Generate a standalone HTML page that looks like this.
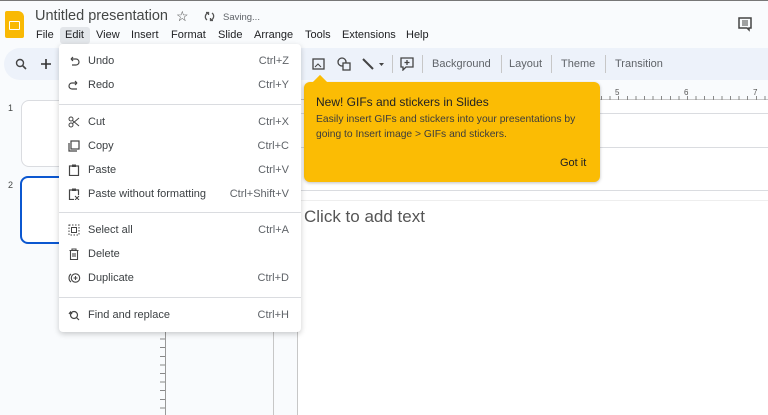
<!DOCTYPE html>
<html><head><style>
*{margin:0;padding:0;box-sizing:border-box}
body{width:768px;height:415px;overflow:hidden;background:#f9fbfd;font-family:"Liberation Sans",sans-serif;color:#444746;position:relative}
.a{position:absolute}
.mi{position:absolute;left:0;width:242px;height:24px;font-size:11px;color:#3c4043}
.mi .t{position:absolute;left:29px;top:5px}
.mi .k{position:absolute;right:12px;top:5px;color:#5f6368}
.mi svg{position:absolute;left:9px;top:5px}
.sep{position:absolute;left:0;width:242px;height:1px;background:#dadce0}
.tb{position:absolute;top:58px;font-size:11px;color:#5f6368}
.vs{position:absolute;top:55px;width:1px;height:18px;background:#c7c7c7}
</style></head><body>
<div class="a" style="left:0;top:0;width:768px;height:1px;background:#777"></div>
<!-- logo -->
<div class="a" style="left:5px;top:11px;width:19px;height:27px;background:#f9b904;border-radius:2px 6px 2px 2px"></div>
<div class="a" style="left:9px;top:21px;width:11px;height:9px;border:1.5px solid #fff;border-radius:1px"></div>
<div class="a" style="left:35px;top:8px;font-size:14.5px;color:#444746">Untitled presentation</div>
<div class="a" style="left:176px;top:8px;font-size:14px;color:#444">☆</div>
<svg class="a" style="left:204px;top:11px" width="11" height="11"><path d="M4 2a4 4 0 00-1 7M7 9a4 4 0 001-7M2 1.5h2.5v2.5M9 9.5H6.5V7" fill="none" stroke="#555" stroke-width="1.3"/></svg>
<div class="a" style="left:223px;top:12px;font-size:9.5px;color:#5f6368">Saving...</div>
<div class="a" style="left:60px;top:27px;width:30px;height:17px;background:#e3e6ea;border-radius:3px"></div>
<div class="a" style="left:0;top:29px;font-size:11px;color:#202124">
<span class="a" style="left:36px">File</span><span class="a" style="left:65px">Edit</span><span class="a" style="left:96px">View</span><span class="a" style="left:131px">Insert</span><span class="a" style="left:171px">Format</span><span class="a" style="left:218px">Slide</span><span class="a" style="left:254px">Arrange</span><span class="a" style="left:305px">Tools</span><span class="a" style="left:342px">Extensions</span><span class="a" style="left:406px">Help</span></div>
<svg class="a" style="left:737px;top:16px" width="16" height="16" viewBox="0 0 16 16"><path d="M2 2h12v10h-2v2l-2-2H2z" fill="none" stroke="#444" stroke-width="1.5"/><path d="M5 5h6M5 7h6M5 9h6" stroke="#444" stroke-width="1"/></svg>
<!-- toolbar -->
<div class="a" style="left:4px;top:48px;width:764px;height:32px;background:#edf2fa;border-radius:16px 0 0 16px"></div>
<svg class="a" style="left:15px;top:58px" width="12" height="12"><circle cx="5" cy="5" r="3.5" fill="none" stroke="#444" stroke-width="1.4"/><path d="M7.5 7.5L11 11" stroke="#444" stroke-width="1.6"/></svg>
<svg class="a" style="left:41px;top:59px" width="10" height="10"><path d="M5 0v10M0 5h10" stroke="#333" stroke-width="1.6"/></svg>
<svg class="a" style="left:312px;top:58px" width="13" height="12"><rect x="1" y="1" width="11" height="10" fill="none" stroke="#444" stroke-width="1.3"/><path d="M3 9l3-3 3 3" stroke="#444" fill="none"/></svg>
<svg class="a" style="left:337px;top:57px" width="14" height="14"><circle cx="5" cy="5" r="4" fill="none" stroke="#444" stroke-width="1.3"/><rect x="6" y="6" width="7" height="7" fill="#edf2fa" stroke="#444" stroke-width="1.3"/></svg>
<svg class="a" style="left:362px;top:58px" width="22" height="12"><path d="M1 1l10 10" stroke="#444" stroke-width="2"/><path d="M17 5l2.5 3 2.5-3z" fill="#444"/></svg>
<div class="vs" style="left:392px"></div>
<svg class="a" style="left:400px;top:57px" width="14" height="14"><path d="M1 1h12v9H6l-3 3V10H1z" fill="none" stroke="#444" stroke-width="1.3"/><path d="M7 3v5M4.5 5.5h5" stroke="#444" stroke-width="1.3"/></svg>
<div class="vs" style="left:422px"></div>
<div class="tb" style="left:432px">Background</div><div class="vs" style="left:501px"></div>
<div class="tb" style="left:509px">Layout</div><div class="vs" style="left:551px"></div>
<div class="tb" style="left:561px">Theme</div><div class="vs" style="left:605px"></div>
<div class="tb" style="left:615px">Transition</div>
<!-- ruler -->
<div class="a" style="left:300px;top:99px;width:468px;height:1px;background:#c7c7c7"></div>
<div class="a" style="left:300px;top:96px;width:468px;height:4px;background:repeating-linear-gradient(90deg,#888 0 1px,transparent 1px 8.6px)"></div>
<div class="a" style="left:615px;top:88px;font-size:8px;color:#555">5</div>
<div class="a" style="left:684px;top:88px;font-size:8px;color:#555">6</div>
<div class="a" style="left:753px;top:88px;font-size:8px;color:#555">7</div>
<!-- slide area -->
<div class="a" style="left:297px;top:100px;width:471px;height:315px;background:#fff;border-left:1px solid #c7c7c7"></div>
<div class="a" style="left:300px;top:113px;width:468px;height:1px;background:#dadce0"></div>
<div class="a" style="left:300px;top:147px;width:468px;height:1px;background:#dadce0"></div>
<div class="a" style="left:300px;top:190px;width:468px;height:1px;background:#dadce0"></div>
<div class="a" style="left:300px;top:200px;width:468px;height:1px;background:#eee"></div>
<div class="a" style="left:304px;top:207px;font-size:17px;color:#555">Click to add text</div>
<div class="a" style="left:273px;top:300px;width:1px;height:115px;background:#c7c7c7"></div>
<div class="a" style="left:165px;top:330px;width:1px;height:85px;background:#999"></div>
<div class="a" style="left:160px;top:330px;width:5px;height:85px;background:repeating-linear-gradient(180deg,#888 0 1px,transparent 1px 8.6px)"></div>
<!-- filmstrip -->
<div class="a" style="left:8px;top:103px;font-size:9px">1</div>
<div class="a" style="left:21px;top:100px;width:60px;height:67px;border:1px solid #dadce0;border-radius:8px;background:#fff"></div>
<div class="a" style="left:8px;top:180px;font-size:9px">2</div>
<div class="a" style="left:20px;top:176px;width:60px;height:68px;border:2px solid #0b57d0;border-radius:8px;background:#fff"></div>
<!-- tooltip -->
<div class="a" style="left:304px;top:82px;width:296px;height:100px;background:#fbbc04;border-radius:6px;box-shadow:0 1px 3px rgba(0,0,0,.25)"></div>
<div class="a" style="left:315px;top:77px;width:10px;height:10px;background:#fbbc04;transform:rotate(45deg)"></div>
<div class="a" style="left:316px;top:95px;font-size:12px;color:#202124">New! GIFs and stickers in Slides</div>
<div class="a" style="left:316px;top:112px;font-size:10.3px;color:#3c3c3c;line-height:15px;width:285px">Easily insert GIFs and stickers into your presentations by going to Insert image &gt; GIFs and stickers.</div>
<div class="a" style="left:560px;top:157px;font-size:11px;color:#202124">Got it</div>
<!-- menu -->
<div class="a" style="left:59px;top:44px;width:242px;height:288px;background:#fff;border-radius:4px;box-shadow:0 2px 6px rgba(0,0,0,.2)">
<div class="mi" style="top:6px"><svg width="12" height="12"><path d="M3 4h5a3 3 0 010 6H4M3 4l2-2M3 4l2 2" fill="none" stroke="#444" stroke-width="1.2"/></svg><span class="t">Undo</span><span class="k">Ctrl+Z</span></div>
<div class="mi" style="top:30px"><svg width="12" height="12"><path d="M9 4H4a3 3 0 000 6h5M9 4L7 2M9 4L7 6" fill="none" stroke="#444" stroke-width="1.2"/></svg><span class="t">Redo</span><span class="k">Ctrl+Y</span></div>
<div class="sep" style="top:60px"></div>
<div class="mi" style="top:67px"><svg width="12" height="12"><circle cx="3" cy="3" r="2" fill="none" stroke="#444"/><circle cx="3" cy="9" r="2" fill="none" stroke="#444"/><path d="M4.5 4.5L11 10M4.5 7.5L11 2" stroke="#444"/></svg><span class="t">Cut</span><span class="k">Ctrl+X</span></div>
<div class="mi" style="top:91px"><svg width="12" height="12"><rect x="3" y="1" width="8" height="8" fill="none" stroke="#444" stroke-width="1.2"/><path d="M1 3v8h8" fill="none" stroke="#444" stroke-width="1.2"/></svg><span class="t">Copy</span><span class="k">Ctrl+C</span></div>
<div class="mi" style="top:115px"><svg width="12" height="12"><rect x="1.5" y="2" width="9" height="9.5" fill="none" stroke="#444" stroke-width="1.2"/><rect x="4" y="0.5" width="4" height="2.5" fill="#444"/></svg><span class="t">Paste</span><span class="k">Ctrl+V</span></div>
<div class="mi" style="top:139px"><svg width="12" height="12"><path d="M6 11.5H1.5V2h9v5" fill="none" stroke="#444" stroke-width="1.2"/><rect x="4" y="0.5" width="4" height="2.5" fill="#444"/><path d="M7 8l4 4M11 8l-4 4" stroke="#444"/></svg><span class="t">Paste without formatting</span><span class="k">Ctrl+Shift+V</span></div>
<div class="sep" style="top:168px"></div>
<div class="mi" style="top:175px"><svg width="12" height="12"><rect x="1" y="1" width="10" height="10" fill="none" stroke="#444" stroke-dasharray="1.5 1.5"/><rect x="3.5" y="3.5" width="5" height="5" fill="none" stroke="#444"/></svg><span class="t">Select all</span><span class="k">Ctrl+A</span></div>
<div class="mi" style="top:199px"><svg width="12" height="12"><path d="M1.5 2.5h9M4 2.5V1h4v1.5M2.5 2.5v9h7v-9M5 5v4M7 5v4" fill="none" stroke="#444" stroke-width="1.1"/></svg><span class="t">Delete</span><span class="k"></span></div>
<div class="mi" style="top:223px"><svg width="13" height="12"><circle cx="7.5" cy="6" r="4.2" fill="none" stroke="#444" stroke-width="1.1"/><path d="M3 2a5 5 0 000 8M7.5 4v4M5.5 6h4" fill="none" stroke="#444" stroke-width="1.1"/></svg><span class="t">Duplicate</span><span class="k">Ctrl+D</span></div>
<div class="sep" style="top:253px"></div>
<div class="mi" style="top:260px"><svg width="12" height="12"><circle cx="6" cy="6" r="3.5" fill="none" stroke="#444" stroke-width="1.2"/><path d="M8.5 8.5L11 11M1 5l1.5-2L4 5" fill="none" stroke="#444" stroke-width="1.2"/></svg><span class="t">Find and replace</span><span class="k">Ctrl+H</span></div>
</div>
</body></html>
